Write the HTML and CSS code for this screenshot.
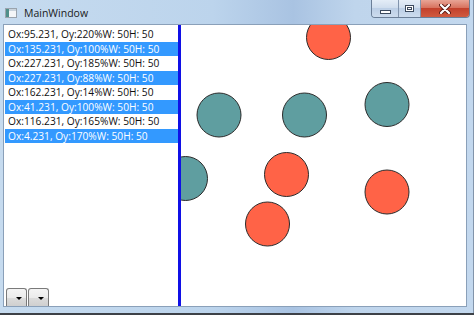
FILE: index.html
```html
<!DOCTYPE html>
<html lang="en">
<head>
  <meta charset="UTF-8">
  <title>MainWindow</title>
  <link rel="stylesheet" href="styles.css">
</head>
<body>
  <div class="window">
    <!-- Title bar -->
    <div class="titlebar">
      <svg class="app-icon" width="12" height="10" viewBox="0 0 12 10">
        <rect x="0.5" y="0.5" width="11" height="9" fill="#f4f6f8" stroke="#9aa3ad"/>
        <rect x="1" y="1" width="3" height="8" fill="#4f8f8a"/>
        <rect x="4" y="1" width="7" height="2" fill="#c9d3dc"/>
      </svg>
      <span class="title">MainWindow</span>
      <div class="caption-buttons">
        <div class="cap cap-min"><span class="glyph-min"></span></div>
        <div class="cap cap-max"><span class="glyph-max"></span></div>
        <div class="cap cap-close">
          <svg width="12" height="10" viewBox="0 0 12 10">
            <path d="M2 1 L10 9 M10 1 L2 9" stroke="#5a1a14" stroke-width="4" stroke-linecap="round"/>
            <path d="M2 1 L10 9 M10 1 L2 9" stroke="#fff" stroke-width="2.2" stroke-linecap="round"/>
          </svg>
        </div>
      </div>
    </div>

    <!-- Client area -->
    <div class="client">
      <div class="side">
        <ul class="shape-list">
          <li>Ox:95.231, Oy:220%W: 50H: 50</li>
          <li class="selected">Ox:135.231, Oy:100%W: 50H: 50</li>
          <li>Ox:227.231, Oy:185%W: 50H: 50</li>
          <li class="selected">Ox:227.231, Oy:88%W: 50H: 50</li>
          <li>Ox:162.231, Oy:14%W: 50H: 50</li>
          <li class="selected">Ox:41.231, Oy:100%W: 50H: 50</li>
          <li>Ox:116.231, Oy:165%W: 50H: 50</li>
          <li class="selected">Ox:4.231, Oy:170%W: 50H: 50</li>
        </ul>
        <div class="toolbar">
          <div class="drop"><span class="arrow"></span></div>
          <div class="drop"><span class="arrow"></span></div>
        </div>
      </div>

      <div class="splitter"></div>

      <svg class="canvas" viewBox="0 0 285 281">
        <g stroke="#2b2b2b" stroke-width="1">
          <circle cx="147.5" cy="12.5" r="22" fill="#ff6347"/>
          <circle cx="38" cy="90" r="22" fill="#5f9ea0"/>
          <circle cx="123.5" cy="90" r="22" fill="#5f9ea0"/>
          <circle cx="206" cy="79.5" r="22" fill="#5f9ea0"/>
          <circle cx="4.5" cy="153.5" r="22" fill="#5f9ea0"/>
          <circle cx="105.5" cy="149.5" r="22" fill="#ff6347"/>
          <circle cx="206" cy="167" r="22" fill="#ff6347"/>
          <circle cx="86.5" cy="199" r="22" fill="#ff6347"/>
        </g>
      </svg>
    </div>
  </div>
</body>
</html>
```

FILE: styles.css
```css
body {
  margin: 0;
  width: 474px;
  height: 315px;
  overflow: hidden;
  background-color: #3d4147;
  font-family: "Segoe UI", "Open Sans", sans-serif;
}

.window {
  height: 313px;
  display: flex;
  flex-direction: column;
  background: linear-gradient(90deg, #c6dbef 0%, #bcd4ec 45%, #a9c3e2 62%, #bfd5ec 75%, #c3d8ee 100%);
  border-right: 1px solid #8294aa;
  box-sizing: border-box;
}

/* Title bar */
.titlebar {
  height: 24px;
  display: flex;
  align-items: center;
  padding-left: 5px;
}

.app-icon {
  margin-top: 2px;
}

.title {
  margin-left: 7px;
  font-size: 10.5px;
  color: #1a1a1a;
  margin-top: 1px;
}

.caption-buttons {
  margin-left: auto;
  margin-right: 3px;
  align-self: flex-start;
  display: flex;
  height: 17px;
  border: 1px solid #6b7f98;
  border-top: none;
  border-radius: 0 0 4px 4px;
  overflow: hidden;
}

.cap {
  display: flex;
  align-items: center;
  justify-content: center;
  background: linear-gradient(#e4edf7, #d0deee 45%, #bccfe6 50%, #cddcee);
}

.cap-min {
  width: 26px;
  border-right: 1px solid #8194ad;
}

.cap-max {
  width: 21px;
  border-right: 1px solid #8194ad;
}

.cap-close {
  width: 48px;
  background: linear-gradient(#e8a596, #d8735f 45%, #c3412c 50%, #d05a3f);
}

.glyph-min {
  width: 9px;
  height: 2px;
  margin-top: 6px;
  background-color: #fff;
  border: 1px solid #3b4a5e;
}

.glyph-max {
  width: 7px;
  height: 5px;
  background-color: #fff;
  border: 1px solid #3b4a5e;
  box-shadow: inset 0 0 0 1px #fff, inset 0 0 0 2px #3b4a5e;
}

/* Client area */
.client {
  flex: 1;
  display: flex;
  margin: 0 6px 6px 3px;
  border: 1px solid #8aa0b9;
  background-color: #fff;
  min-height: 0;
}

.side {
  width: 174px;
  display: flex;
  flex-direction: column;
}

.shape-list {
  list-style: none;
  margin: 0;
  padding: 2px 0 0 1px;
}

.shape-list li {
  font-size: 10.2px;
  line-height: 14.5px;
  height: 14.5px;
  padding-left: 3px;
  color: #111;
  white-space: nowrap;
}

.shape-list li.selected {
  background-color: #3399ff;
  color: #fff;
}

.toolbar {
  margin-top: auto;
  display: flex;
  gap: 1px;
  padding-left: 2px;
}

.drop {
  width: 19px;
  height: 18px;
  border: 1px solid #7a7a7a;
  border-bottom: none;
  border-radius: 3px 3px 0 0;
  background: linear-gradient(#f4f4f4, #ebebeb 50%, #dcdcdc 51%, #cfcfcf);
  display: flex;
  align-items: center;
  justify-content: center;
  padding-left: 4px;
  box-sizing: border-box;
  width: 21px;
}

.arrow {
  width: 0;
  height: 0;
  border-left: 3px solid transparent;
  border-right: 3px solid transparent;
  border-top: 3px solid #000;
  margin-top: 2px;
}

.splitter {
  width: 3px;
  background-color: #1010e6;
}

.canvas {
  flex: 1;
  height: 100%;
  display: block;
}
```
